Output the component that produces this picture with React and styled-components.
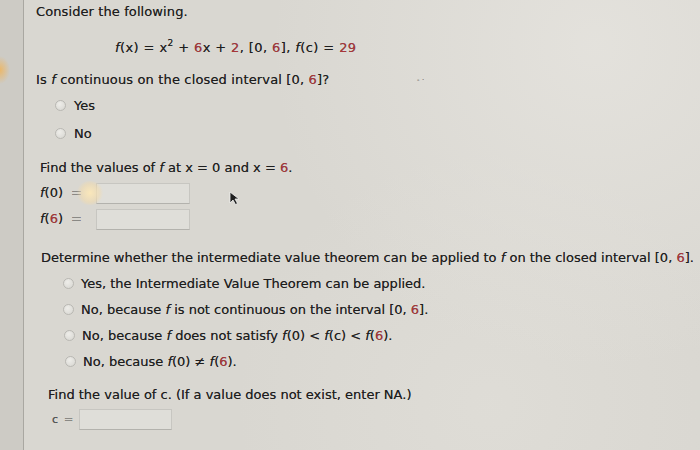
import React from "react";
import styled, { createGlobalStyle } from "styled-components";

const Global = createGlobalStyle`
  html, body { margin: 0; padding: 0; }
  body {
    width: 700px; height: 450px; overflow: hidden;
    background: #dcdad4;
    font-family: "DejaVu Sans", Verdana, sans-serif;
    color: #1e1e1e;
  }
`;

const Page = styled.div`
  display: flex;
  width: 700px;
  height: 450px;
  background:
    radial-gradient(circle at 85% 10%, rgba(232,230,225,0.7), transparent 45%),
    radial-gradient(circle at 70% 90%, rgba(226,224,218,0.6), transparent 40%),
    #d9d7d1;
`;

const Strip = styled.div`
  width: 23px;
  flex: none;
  border-right: 1px solid #a9a7a1;
  background:
    radial-gradient(ellipse 10px 14px at 0px 70px, rgba(240,180,90,0.85), transparent),
    #cdcbc5;
`;

const Main = styled.div`
  flex: 1;
  display: flex;
  flex-direction: column;
  padding: 3px 0 0 12px;
  font-size: 13px;
  line-height: 18px;
  text-shadow: 0 0 0.4px rgba(20,20,20,0.6);
`;

const Line = styled.div`
  height: 18px;
  margin-top: ${(p) => p.$top || 0}px;
  padding-left: ${(p) => p.$left || 0}px;
  letter-spacing: ${(p) => p.$ls || 0}px;
  white-space: nowrap;
  position: relative;
`;

const Red = styled.span`
  color: #a8363a;
`;

const I = styled.span`
  font-style: italic;
`;

const Sup = styled.sup`
  font-size: 9px;
  line-height: 0;
  vertical-align: 6px;
`;

const Radio = styled.span`
  display: inline-block;
  box-sizing: border-box;
  width: 11px;
  height: 11px;
  border-radius: 50%;
  border: 1px solid #b9b8b3;
  background: radial-gradient(circle at 40% 35%, #eeede9, #d6d5d0);
  margin-right: ${(p) => p.$gap || 7}px;
  vertical-align: -1px;
`;

const Row = styled.div`
  display: flex;
  align-items: center;
  height: ${(p) => p.$h || 22}px;
  margin-top: ${(p) => p.$top || 0}px;
  padding-left: ${(p) => p.$left || 0}px;
  white-space: nowrap;
  position: relative;
`;

const Label = styled.span`
  width: ${(p) => p.$w}px;
  flex: none;
  font-size: ${(p) => p.$fs || 13}px;
  color: ${(p) => p.$c || "inherit"};
`;

const Eq = styled.span`
  color: #8a8985;
  font-size: ${(p) => p.$fs || 13}px;
  flex: none;
`;

const Input = styled.div`
  width: ${(p) => p.$w || 94}px;
  height: ${(p) => p.$h || 21}px;
  margin-left: ${(p) => p.$ml || 14}px;
  border: 1px solid #c7c6c1;
  border-bottom-color: #b3b2ad;
  background: #dfded9;
  box-sizing: border-box;
  flex: none;
`;

const Glare = styled.span`
  position: absolute;
  left: 40px;
  top: -1px;
  width: 28px;
  height: 24px;
  border-radius: 50%;
  background: radial-gradient(circle, rgba(252,232,185,0.95), rgba(245,220,170,0.5) 50%, transparent 72%);
`;

const Cursor = styled.svg`
  position: absolute;
  left: 193px;
  top: 9px;
`;

const Speck = styled.span`
  position: absolute;
  left: 381px;
  top: 0px;
  font-size: 7px;
  color: #8d8c88;
`;

export default function App() {
  return (
    <>
      <Global />
      <Page>
        <Strip />
        <Main>
          <Line $ls={0.1}>Consider the following.</Line>
          <Line $top={18} $left={79} $ls={0.4}>
            <I>f</I>(x) = x<Sup>2</Sup> + <Red>6</Red>x + <Red>2</Red>, [0, <Red>6</Red>], <I>f</I>(c) = <Red>29</Red>
          </Line>
          <Line $top={14} $ls={0.15}>
            Is <I>f</I> continuous on the closed interval [0, <Red>6</Red>]?
            <Speck>- ·</Speck>
          </Line>
          <Line $top={8} $left={19}>
            <Radio $gap={8} />Yes
          </Line>
          <Line $top={10} $left={19}>
            <Radio $gap={8} />No
          </Line>
          <Line $top={16} $left={4}>
            Find the values of <I>f</I> at x = 0 and x = <Red>6</Red>.
          </Line>
          <Row $top={5} $left={4}>
            <Label $w={31}><I>f</I>(0)</Label>
            <Eq>=</Eq>
            <Glare />
            <Input />
            <Cursor width="12" height="14" viewBox="0 0 12 14">
              <path d="M1 1 L1 12 L4 9 L6.5 13.5 L8.5 12.5 L6 8 L10 8 Z" fill="#1f1f1f" stroke="#f2f2f2" strokeWidth="0.8" />
            </Cursor>
          </Row>
          <Row $top={4} $left={4}>
            <Label $w={31}><I>f</I>(<Red>6</Red>)</Label>
            <Eq>=</Eq>
            <Input />
          </Row>
          <Line $top={19} $left={5}>
            Determine whether the intermediate value theorem can be applied to <I>f</I> on the closed interval [0, <Red>6</Red>].
          </Line>
          <Line $top={8} $left={27}>
            <Radio />Yes, the Intermediate Value Theorem can be applied.
          </Line>
          <Line $top={8} $left={27}>
            <Radio />No, because <I>f</I> is not continuous on the interval [0, <Red>6</Red>].
          </Line>
          <Line $top={8} $left={28}>
            <Radio />No, because <I>f</I> does not satisfy <I>f</I>(0) &lt; <I>f</I>(c) &lt; <I>f</I>(<Red>6</Red>).
          </Line>
          <Line $top={8} $left={29}>
            <Radio />No, because <I>f</I>(0) ≠ <I>f</I>(<Red>6</Red>).
          </Line>
          <Line $top={15} $left={12}>
            Find the value of c. (If a value does not exist, enter NA.)
          </Line>
          <Row $top={5} $left={16} $h={21}>
            <Label $w={12} $fs={11} $c="#555">c</Label>
            <Eq $fs={11}>=</Eq>
            <Input $w={93} $h={21} $ml={6} />
          </Row>
        </Main>
      </Page>
    </>
  );
}
